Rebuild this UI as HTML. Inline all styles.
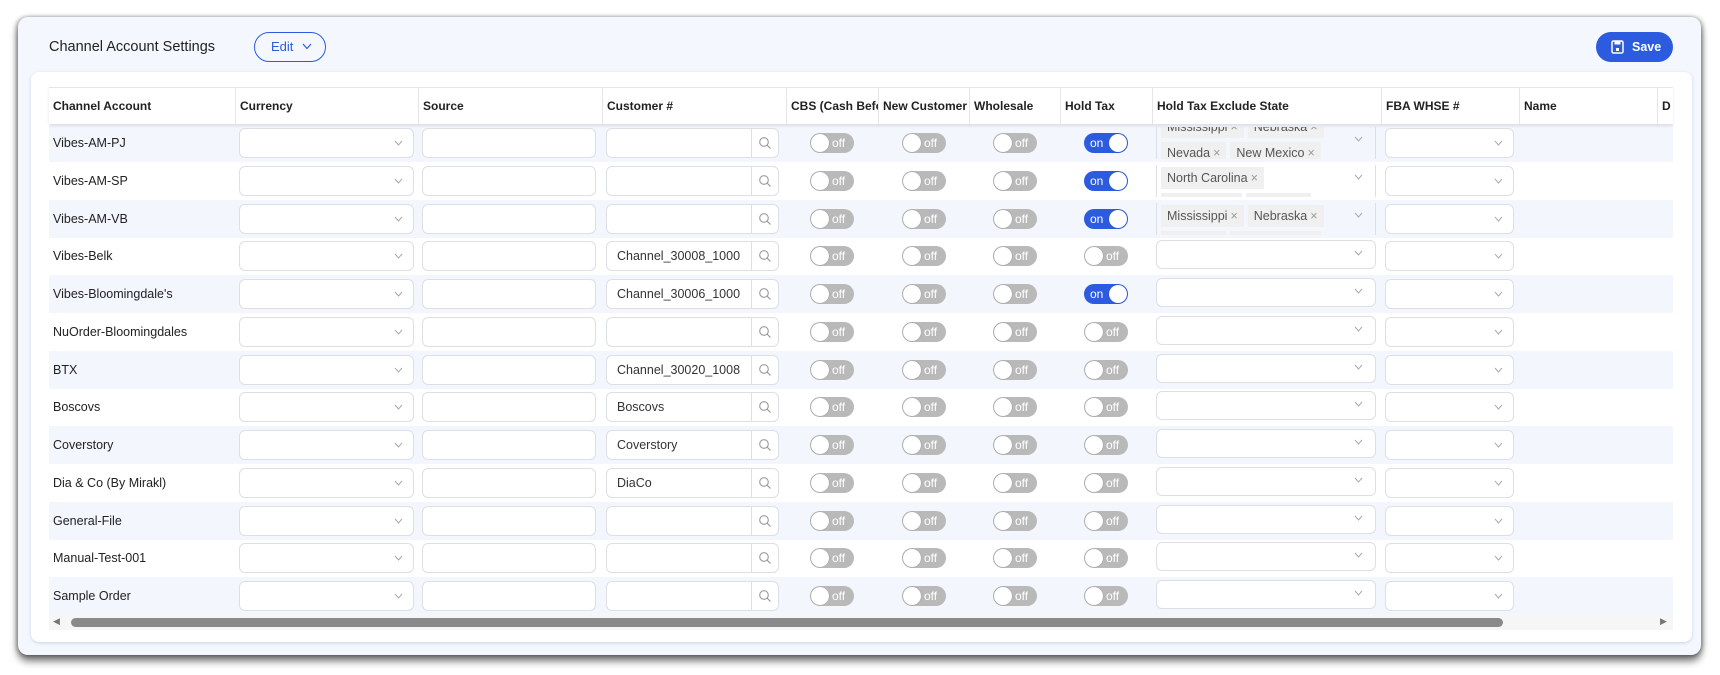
<!DOCTYPE html>
<html><head><meta charset="utf-8"><style>
*{box-sizing:border-box;margin:0;padding:0}
body{width:1720px;height:675px;background:#fff;font-family:"Liberation Sans",sans-serif;font-size:12.5px;color:#222;position:relative;overflow:hidden}
.outer{position:absolute;left:18px;top:17px;width:1683px;height:638px;background:#f4f7fd;border-radius:10px;box-shadow:0 6px 8px rgba(0,0,0,.55),-2px 0 4px rgba(0,0,0,.25),2px 0 4px rgba(0,0,0,.25)}
.title{position:absolute;left:49px;top:39px;font-size:14.5px;color:#222}
.edit{position:absolute;left:254px;top:32px;width:72px;height:30px;border:1.5px solid #2c5be0;border-radius:15px;color:#2c5be0;font-size:13px;padding-left:16px;line-height:27px}
.save{position:absolute;left:1596px;top:32px;width:77px;height:30px;background:#2c5be0;border-radius:15px;color:#fff;font-size:12.5px;font-weight:bold;line-height:30px;padding-left:36px}
.inner{position:absolute;left:31px;top:72px;width:1661px;height:570px;background:#fff;border-radius:8px;box-shadow:0 1px 3px rgba(120,140,200,.35)}
.hdr{position:absolute;left:49px;top:87px;width:1624px;height:37px;background:#fff;border-top:1px solid #e6e6e6;box-shadow:0 2px 3px rgba(0,0,0,.1);overflow:hidden;z-index:2}
.hc{position:absolute;top:0;height:36px;line-height:36px;font-weight:bold;font-size:12px;padding-left:4px;border-left:1px solid #e6e6e6;white-space:nowrap;overflow:hidden}
.row{position:absolute;left:49px;width:1624px;height:38px;overflow:hidden}
.row.s{background:#f3f6fd}
.nm{position:absolute;left:4px;top:0;line-height:38px}
.sel{position:absolute;top:4px;height:30px;background:#fff;border:1px solid #dcdfe6;border-radius:6px}
.ch{position:absolute;right:10px;top:11px}
.cust .dv{position:absolute;right:26px;top:0;bottom:0;border-left:1px solid #dcdfe6}
.cust .v{position:absolute;left:10px;top:7px;color:#333}
.tg{position:absolute;top:9px;width:44px;height:20px;border-radius:10px;background:#b9b9b9}
.tg .k{position:absolute;left:1px;top:1px;width:18px;height:18px;border-radius:50%;background:#fff;box-shadow:0 0 1px rgba(0,0,0,.4)}
.tg .t{position:absolute;left:22px;top:3px;color:#fff;font-size:12px}
.tg.on{background:#2c5be0}.tg.on .k{left:25px}.tg.on .t{left:6px}
.ms{position:absolute;left:1107px;top:3px;width:220px;height:32px;border-left:1px solid #dcdfe6;border-right:1px solid #dcdfe6;overflow:hidden}
.ms.b{background:#fff;border:1px solid #dcdfe6;border-radius:6px;height:29px}
.tags{position:absolute;left:4px;width:180px}
.tag{display:inline-block;background:#f0f0f0;color:#555;height:22px;line-height:22px;padding:0 6px;margin:0 4px 4px 0;font-size:12.5px}
.tag i{font-style:normal;color:#999;margin-left:3px}
.ms .ch{right:12px;top:9px}
.sb{position:absolute;left:49px;top:615px;width:1624px;height:15px;background:#f6f6f6}
.thumb{position:absolute;left:22px;top:3px;width:1432px;height:9px;border-radius:5px;background:#8a8a8a}
</style></head><body>
<div class="outer"></div>
<div class="title">Channel Account Settings</div>
<div class="edit">Edit <svg style="margin-left:5px;vertical-align:1px" width="10" height="7" viewBox="0 0 10 7"><path d="M1 1 L5 5.5 L9 1" fill="none" stroke="#2c5be0" stroke-width="1.2"/></svg></div>
<div class="save"><svg style="position:absolute;left:15px;top:8px" width="13" height="14" viewBox="0 0 13 14"><rect x="1" y="1" width="11" height="12" rx="1.5" fill="none" stroke="#fff" stroke-width="1.5"/><rect x="3.5" y="1" width="6" height="3.5" fill="#fff"/><rect x="5" y="8" width="3" height="3" fill="#fff"/></svg>Save</div>
<div class="inner"></div>
<div class="hdr">
<div class="hc" style="left:0;border-left:none;width:186px">Channel Account</div>
<div class="hc" style="left:186px;width:183px">Currency</div>
<div class="hc" style="left:369px;width:184px">Source</div>
<div class="hc" style="left:553px;width:184px">Customer #</div>
<div class="hc" style="left:737px;width:92px">CBS (Cash Before</div>
<div class="hc" style="left:829px;width:91px">New Customer</div>
<div class="hc" style="left:920px;width:91px">Wholesale</div>
<div class="hc" style="left:1011px;width:92px">Hold Tax</div>
<div class="hc" style="left:1103px;width:229px">Hold Tax Exclude State</div>
<div class="hc" style="left:1332px;width:138px">FBA WHSE #</div>
<div class="hc" style="left:1470px;width:138px">Name</div>
<div class="hc" style="left:1608px;width:30px">D</div>
</div>
<div id="rows"></div>
<div class="sb"><span style="position:absolute;left:4px;top:1px;font-size:9px;color:#777">&#9664;</span><div class="thumb"></div><span style="position:absolute;left:1611px;top:1px;font-size:9px;color:#777">&#9654;</span></div>
<script>
var R=[["Vibes-AM-PJ","",1],["Vibes-AM-SP","",1],["Vibes-AM-VB","",1],["Vibes-Belk","Channel_30008_1000",0],["Vibes-Bloomingdale's","Channel_30006_1000",1],["NuOrder-Bloomingdales","",0],["BTX","Channel_30020_1008",0],["Boscovs","Boscovs",0],["Coverstory","Coverstory",0],["Dia & Co (By Mirakl)","DiaCo",0],["General-File","",0],["Manual-Test-001","",0],["Sample Order","",0]];
var h="";
var CH='<svg class="ch" width="9" height="6" viewBox="0 0 9 6"><path d="M1 1 L4.5 5 L8 1" fill="none" stroke="#aaa" stroke-width="1"/></svg>';
function T(on){return '<div class="tg'+(on?' on':'')+'" style="left:LPX"><div class="k"></div><span class="t">'+(on?'on':'off')+'</span></div>';}
var tg=function(x){return '<span class="tag">'+x+'<i>×</i></span>'};
R.forEach(function(r,i){
 var top=124+i*37.75;
 h+='<div class="row'+(i%2==0?' s':'')+'" style="top:'+top+'px">';
 h+='<div class="nm">'+r[0]+'</div>';
 h+='<div class="sel" style="left:190px;width:175px">'+CH+'</div>';
 h+='<div class="sel" style="left:373px;width:174px"></div>';
 h+='<div class="sel cust" style="left:557px;width:173px">'+(r[1]?'<span class="v">'+r[1]+'</span>':'')+'<div class="dv"></div><svg style="position:absolute;right:6px;top:7px" width="14" height="14" viewBox="0 0 14 14"><circle cx="6" cy="6" r="4.3" fill="none" stroke="#999" stroke-width="1.1"/><line x1="9" y1="9" x2="12.5" y2="12.5" stroke="#999" stroke-width="1.2"/></svg></div>';
 [761,853,944].forEach(function(x){h+=T(0).replace('LPX',x+'px');});
 h+=T(r[2]).replace('LPX','1035px');
 if(i==0)h+='<div class="ms"><div class="tags" style="top:-11px">'+tg('Mississippi')+tg('Nebraska')+tg('Nevada')+tg('New Mexico')+'</div>'+CH+'</div>';
 else if(i==1)h+='<div class="ms"><div class="tags" style="top:2px">'+tg('North Carolina')+'<br>'+tg('Nevada xx')+tg('Ohio xx')+'</div>'+CH+'</div>';
 else if(i==2)h+='<div class="ms"><div class="tags" style="top:2px">'+tg('Mississippi')+tg('Nebraska')+tg('Nevada')+tg('New Mexico')+'</div>'+CH+'</div>';
 else h+='<div class="ms b">'+CH+'</div>';
 h+='<div class="sel" style="left:1336px;width:129px">'+CH+'</div>';
 h+='</div>';
});
document.getElementById('rows').innerHTML=h;
</script>
</body></html>
